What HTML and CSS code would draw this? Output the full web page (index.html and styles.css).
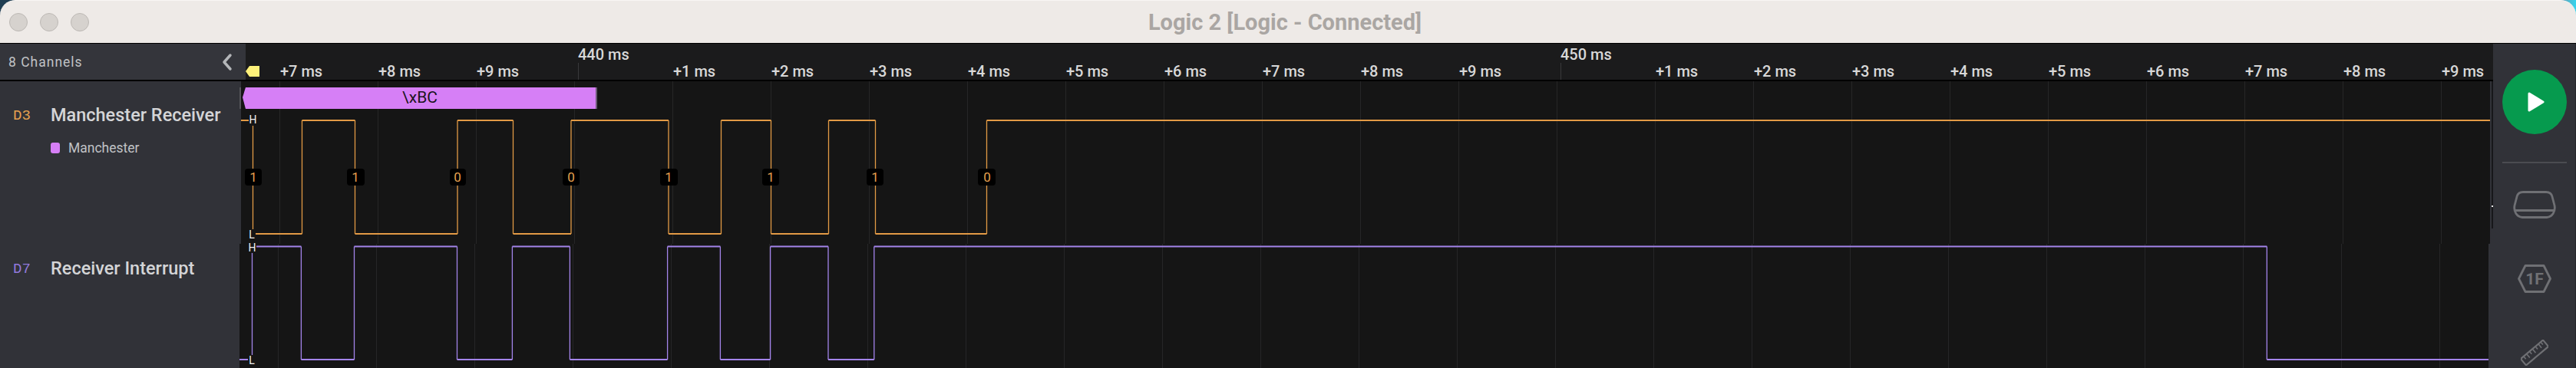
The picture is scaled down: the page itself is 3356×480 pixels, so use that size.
FILE: index.html
```html
<!DOCTYPE html>
<html lang="en">
  <head>
    <meta charset="UTF-8" />
    <title>Logic 2 [Logic - Connected]</title>
    <link rel="stylesheet" href="styles.css">
  </head>
  <body>
    <div class="titlebar">
      <div class="lights">
        <span class="light"></span>
        <span class="light"></span>
        <span class="light"></span>
      </div>
      <div class="title">Logic 2 [Logic - Connected]</div>
    </div>

    <div class="workspace">
      <div class="main">
        <div class="top">
          <div class="channels-head">
            <span class="channels-count">8 Channels</span>
            <svg class="chevron" width="14" height="24" viewBox="0 0 14 24">
              <path d="M11 3 L3 12 L11 21" fill="none" stroke="#b4b6b9" stroke-width="3.5" stroke-linecap="round" stroke-linejoin="round" />
            </svg>
          </div>
          <div class="ruler">
            <svg class="marker" width="18" height="14" viewBox="0 0 18 14">
              <polygon points="5,0 18,0 18,14 5,14 0,7" fill="#fef17a" />
            </svg>
            <div class="tick"><span>+7 ms</span></div>
            <div class="tick"><span>+8 ms</span></div>
            <div class="tick"><span>+9 ms</span></div>
            <div class="tick major"><span>440 ms</span></div>
            <div class="tick"><span>+1 ms</span></div>
            <div class="tick"><span>+2 ms</span></div>
            <div class="tick"><span>+3 ms</span></div>
            <div class="tick"><span>+4 ms</span></div>
            <div class="tick"><span>+5 ms</span></div>
            <div class="tick"><span>+6 ms</span></div>
            <div class="tick"><span>+7 ms</span></div>
            <div class="tick"><span>+8 ms</span></div>
            <div class="tick"><span>+9 ms</span></div>
            <div class="tick major"><span>450 ms</span></div>
            <div class="tick"><span>+1 ms</span></div>
            <div class="tick"><span>+2 ms</span></div>
            <div class="tick"><span>+3 ms</span></div>
            <div class="tick"><span>+4 ms</span></div>
            <div class="tick"><span>+5 ms</span></div>
            <div class="tick"><span>+6 ms</span></div>
            <div class="tick"><span>+7 ms</span></div>
            <div class="tick"><span>+8 ms</span></div>
            <div class="tick"><span>+9 ms</span></div>
          </div>
        </div>

        <div class="row row-d3">
          <div class="channel">
            <div class="channel-line">
              <span class="channel-id id-d3">D3</span>
              <span class="channel-name">Manchester Receiver</span>
            </div>
            <div class="analyzer">
              <span class="swatch"></span>
              <span class="analyzer-name">Manchester</span>
            </div>
          </div>
          <div class="wave">
            <svg width="2930" height="212" viewBox="0 0 2930 212">
              <polygon points="2,21 6,8 462,8 462,36 6,36" fill="#d67ff6" />
              <rect x="462" y="8" width="2" height="28" fill="#6d5a78" />
              <text class="frame-text" x="233" y="28" text-anchor="middle">\xBC</text>
              <path class="trace-h orange" d="M0 51H15.5M15.5 199H79.5M79.5 51H148.5M148.5 199H282M282 51H354.5M354.5 199H430M430 51H557M557 199H625.5M625.5 51H690.5M690.5 199H765.5M765.5 51H826.5M826.5 199H971.5M971.5 51H2930" />
              <path class="trace-v orange" d="M15.5 51V199M79.5 51V199M148.5 51V199M282 51V199M354.5 51V199M430 51V199M557 51V199M625.5 51V199M690.5 51V199M765.5 51V199M826.5 51V199M971.5 51V199" />
              <g class="bit">
                <rect x="5" y="114" width="22" height="22" rx="4" /><text x="16" y="131">1</text>
                <rect x="138" y="114" width="23" height="22" rx="4" /><text x="149" y="131">1</text>
                <rect x="272" y="114" width="21" height="22" rx="4" /><text x="282" y="131">0</text>
                <rect x="419" y="114" width="22" height="22" rx="4" /><text x="430" y="131">0</text>
                <rect x="546" y="114" width="23" height="22" rx="4" /><text x="557" y="131">1</text>
                <rect x="679" y="114" width="22" height="22" rx="4" /><text x="690" y="131">1</text>
                <rect x="815" y="114" width="22" height="22" rx="4" /><text x="826" y="131">1</text>
                <rect x="960" y="114" width="23" height="22" rx="4" /><text x="972" y="131">0</text>
              </g>
              <g class="level">
                <rect x="10" y="44" width="12" height="14" /><text x="15.5" y="55">H</text>
                <rect x="9" y="193" width="10" height="14" /><text x="14" y="205">L</text>
              </g>
            </svg>
          </div>
          <div class="gutter"><div class="scroll"><span class="scroll-dot"></span></div></div>
        </div>

        <div class="row row-d7">
          <div class="channel">
            <div class="channel-line">
              <span class="channel-id id-d7">D7</span>
              <span class="channel-name">Receiver Interrupt</span>
            </div>
          </div>
          <div class="wave">
            <svg width="2930" height="162" viewBox="0 0 2930 162">
              <path class="trace-h purple" d="M0 151H16.5M16.5 3.5H80.4M80.4 151H149.5M149.5 3.5H283.5M283.5 151H355.4M355.4 3.5H430.4M430.4 151H557.6M557.6 3.5H626.4M626.4 151H691.6M691.6 3.5H767M767 151H826.8M826.8 3.5H2641.3M2641.3 151H2930" />
              <path class="trace-v purple" d="M16.5 3.5V151M80.4 3.5V151M149.5 3.5V151M283.5 3.5V151M355.4 3.5V151M430.4 3.5V151M557.6 3.5V151M626.4 3.5V151M691.6 3.5V151M767 3.5V151M826.8 3.5V151M2641.3 3.5V151" />
              <g class="level">
                <rect x="11" y="0" width="11" height="12" /><text x="16.5" y="10">H</text>
                <rect x="11" y="145" width="10" height="14" /><text x="16" y="157">L</text>
              </g>
            </svg>
          </div>
        </div>
      </div>

      <div class="toolbar">
        <button class="play" type="button">
          <svg width="24" height="28" viewBox="0 0 24 28">
            <path d="M3 3 L21 14 L3 25 Z" fill="#fff" stroke="#fff" stroke-width="3" stroke-linejoin="round" />
          </svg>
        </button>
        <div class="divider"></div>
        <svg class="tool tool-device" width="56" height="36" viewBox="0 0 56 36">
          <path d="M13 1.5H43C47.5 1.5 50 3.5 51 7.5L54 19C55.5 27 51 34 44 34.5H12C5 34 .5 27 2 19L5 7.5C6 3.5 8.5 1.5 13 1.5Z" fill="none" stroke="#6f7074" stroke-width="2.8" />
          <path d="M3 25.5H53" fill="none" stroke="#6f7074" stroke-width="2.8" />
        </svg>
        <svg class="tool tool-trigger" width="44" height="37" viewBox="0 0 44 37">
          <polygon points="10,1.5 34,1.5 42.5,18.5 34,35.5 10,35.5 1.5,18.5" fill="none" stroke="#6f7074" stroke-width="2.8" stroke-linejoin="round" />
          <text class="tool-text" x="22" y="26" text-anchor="middle">1F</text>
        </svg>
        <svg class="tool tool-ruler" width="36" height="34" viewBox="0 0 36 34">
          <g transform="rotate(-40 18 17)">
            <rect x="-1" y="11.5" width="38" height="11" fill="none" stroke="#6f7074" stroke-width="2.2" />
            <path d="M4 12V16M9 12V18M14 12V16M19 12V18M24 12V16M29 12V18M33 12V16" fill="none" stroke="#6f7074" stroke-width="1.6" />
          </g>
        </svg>
      </div>
    </div>
  </body>
</html>
```

FILE: styles.css
```css
html,
body {
  margin: 0;
  padding: 0;
  width: 3356px;
  height: 480px;
  overflow: hidden;
}

body {
  font-family: Roboto, "Liberation Sans", sans-serif;
  display: flex;
  flex-direction: column;
  background: linear-gradient(to right, #1f3d52 99%, #6d9ab0 99.4%, #35d5ee 100%);
}

.titlebar {
  flex: 0 0 56px;
  box-sizing: border-box;
  display: flex;
  align-items: center;
  padding-left: 12px;
  background-color: #eeeae7;
  border-top: 1px solid #f8f6f4;
  border-radius: 20px 20px 0 0;
}

.lights {
  display: flex;
  gap: 16px;
}

.light {
  width: 24px;
  height: 24px;
  box-sizing: border-box;
  border-radius: 50%;
  background-color: #d6d2ce;
  border: 1px solid #bdb9b5;
}

.title {
  flex: 1;
  text-align: center;
  padding-right: 124px;
  font-size: 29px;
  font-weight: 700;
  color: #aaa6a3;
}

.workspace {
  flex: 1;
  display: flex;
  min-height: 0;
  border-top: 1px solid #000;
}

.main {
  flex: 0 0 3248px;
  min-width: 0;
  display: flex;
  flex-direction: column;
  background-color: #313238;
}

.top {
  flex: 0 0 47px;
  display: flex;
}

.channels-head {
  flex: 0 0 320px;
  box-sizing: border-box;
  display: flex;
  justify-content: space-between;
  align-items: center;
  padding: 0 17px 0 11px;
  height: 47px;
  background-color: #34353b;
}

.channels-count {
  font-size: 17.5px;
  letter-spacing: 1px;
  color: #c0c2c5;
}

.ruler {
  flex: 1;
  min-width: 0;
  width: 0;
  display: flex;
  align-items: flex-end;
  background-color: #1b1b1c;
  overflow: hidden;
}

.marker {
  flex: 0 0 18px;
  margin: 0 27px 4px 0;
}

.tick {
  flex: 0 0 128px;
  font-size: 20px;
  font-weight: 500;
  color: #d8d8d8;
  line-height: 24px;
}

.tick span {
  display: block;
  margin-bottom: -1px;
}

.tick.major {
  box-sizing: border-box;
  height: 47px;
  margin-left: 4px;
  margin-right: -4px;
  border-left: 1px solid #39393b;
  border-image: linear-gradient(to bottom, transparent 25px, #39393b 25px) 1;
}

.tick.major span {
  margin: 2px 0 0 -1px;
}

.row {
  display: flex;
  background-color: #313238;
}

.row-d3 {
  flex: 0 0 214px;
  border-top: 2px solid #000;
  box-sizing: border-box;
}

.row-d7 {
  flex: 0 0 162px;
}

.row-d3 .channel {
  flex: 0 0 314px;
  padding-top: 29px;
  background-image: linear-gradient(#55565b, #55565b);
  background-size: 2px 28px;
  background-position: right 8px;
  background-repeat: no-repeat;
}

.row-d7 .channel {
  flex: 0 0 312px;
  padding-top: 17px;
}

.channel {
  box-sizing: border-box;
  padding-left: 17px;
  background-color: #313238;
}

.channel-line {
  display: flex;
  align-items: center;
  height: 30px;
}

.channel-id {
  flex: 0 0 49px;
  padding-top: 2px;
  font-family: "Liberation Mono", monospace;
  font-size: 19px;
}

.id-d3 {
  color: #e5a04f;
}

.id-d7 {
  color: #9079da;
}

.channel-name {
  font-size: 23.5px;
  font-weight: 500;
  color: #d4d5d7;
}

.analyzer {
  display: flex;
  align-items: center;
  gap: 11px;
  margin: 18px 0 0 49px;
}

.swatch {
  width: 12px;
  height: 14px;
  border-radius: 3px;
  background-color: #d67ff6;
}

.analyzer-name {
  font-size: 17.5px;
  color: #c0c2c5;
}

.wave {
  flex: 0 0 2930px;
  background-color: #151515;
  background-image: linear-gradient(to right, #262627 1px, transparent 1px);
  background-size: 128px 100%;
  background-position: 50px 0;
}

.wave svg {
  display: block;
  overflow: visible;
}

.trace-h {
  fill: none;
  stroke-width: 2;
}

.trace-v {
  fill: none;
  stroke-width: 1.3;
}

.orange {
  stroke: #e29a45;
}

.purple {
  stroke: #a384ea;
}

.frame-text {
  font-size: 21px;
  fill: #1c1420;
}

.bit rect {
  fill: #000;
}

.bit text {
  font-size: 17px;
  text-anchor: middle;
  fill: #e5a04f;
}

.level rect {
  fill: #151515;
}

.level text {
  font-size: 14px;
  text-anchor: middle;
  fill: #f2f2f2;
}

.gutter {
  flex: 0 0 4px;
}

.scroll {
  width: 2px;
  height: 192px;
  margin: 0 0 0 2px;
  display: flex;
  align-items: flex-end;
  padding-bottom: 28px;
  box-sizing: border-box;
  background-color: #17171a;
}

.scroll-dot {
  width: 2px;
  height: 2px;
  background-color: #e8e8e8;
}

.toolbar {
  flex: 0 0 108px;
  box-sizing: border-box;
  display: flex;
  flex-direction: column;
  align-items: center;
  background-color: #313238;
  border-right: 1px solid #26272b;
}

.play {
  width: 84px;
  height: 84px;
  flex: 0 0 84px;
  margin-top: 34px;
  padding: 0 0 0 4px;
  display: flex;
  align-items: center;
  justify-content: center;
  border: none;
  border-radius: 50%;
  background-color: #069a4e;
}

.divider {
  width: 84px;
  height: 2px;
  flex: 0 0 2px;
  margin: 36px 0 36px;
  background-color: #4b4c51;
}

.tool {
  flex: none;
}

.tool-trigger {
  margin-top: 60px;
}

.tool-ruler {
  margin-top: 61px;
}

.tool-text {
  font-size: 21px;
  font-weight: 700;
  fill: #6f7074;
}
```
